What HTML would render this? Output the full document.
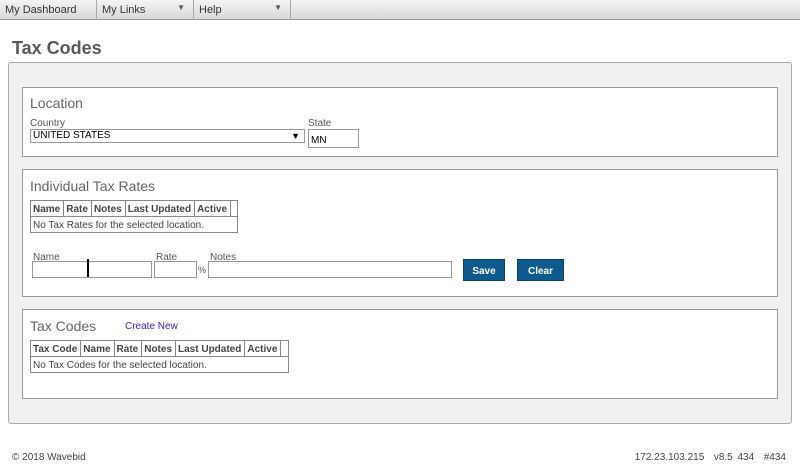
<!DOCTYPE html>
<html><head><style>
*{margin:0;padding:0;box-sizing:border-box}
body{width:800px;height:476px;background:#fff;font-family:"Liberation Sans",sans-serif;color:#555;position:relative;overflow:hidden;font-size:11px}
.a{position:absolute}
.nav{left:0;top:0;width:800px;height:20px;background:linear-gradient(#f4f4f4,#d8d8d8);border-bottom:1px solid #999}
.ni{top:0;height:20px;border-right:1px solid #aaa;padding:4px 5px;color:#333;font-size:11px}
.car{right:8px;top:3px;font-size:8px;color:#555}
.box{background:#fff;border:1px solid #999}
.h{font-size:14px;color:#666}
.lbl{font-size:10px;color:#555}
.inp{background:#fff;border:1px solid #999;height:17px}
table{border-collapse:collapse;font-size:10px;color:#444}
td,th{border:1px solid #888;padding:2px 3px 1px 2px;height:16px;text-align:left;white-space:nowrap}
th{font-weight:bold}
.btn{background:#0d5a8f;color:#fff;font-weight:bold;font-size:10px;text-align:center;line-height:24px;border:1px solid #06446d;height:22px}
</style></head><body>
<div class="a nav"></div>
<div class="a ni" style="left:0;width:97px">My Dashboard</div>
<div class="a ni" style="left:97px;width:97px">My Links<span class="a car">&#9660;</span></div>
<div class="a ni" style="left:194px;width:97px">Help<span class="a car">&#9660;</span></div>
<div class="a" style="left:12px;top:38px;font-size:18px;font-weight:bold;color:#5a5a5a">Tax Codes</div>
<div class="a" style="left:8px;top:62px;width:784px;height:362px;background:#f0f0f0;border:1px solid #aaa;border-radius:3px"></div>

<div class="a box" style="left:22px;top:87px;width:756px;height:70px"></div>
<div class="a h" style="left:30px;top:95px">Location</div>
<div class="a lbl" style="left:30px;top:118px">Country</div>
<div class="a inp" style="left:30px;top:129px;width:275px;height:14px;font-size:10px;color:#000;padding-left:2px;line-height:12px">UNITED STATES<span class="a" style="right:4px;top:0;font-size:9px">&#9660;</span></div>
<div class="a lbl" style="left:308px;top:118px">State</div>
<div class="a inp" style="left:308px;top:129px;width:51px;height:19px;font-size:10px;color:#000;padding:5px 2px">MN</div>

<div class="a box" style="left:22px;top:169px;width:756px;height:128px"></div>
<div class="a h" style="left:30px;top:178px">Individual Tax Rates</div>
<table class="a" style="left:30px;top:200px"><tr><th>Name</th><th>Rate</th><th>Notes</th><th>Last Updated</th><th>Active</th><th style="width:7px"></th></tr><tr><td colspan="6">No Tax Rates for the selected location.</td></tr></table>
<div class="a lbl" style="left:33px;top:252px">Name</div>
<div class="a lbl" style="left:156px;top:252px">Rate</div>
<div class="a lbl" style="left:210px;top:252px">Notes</div>
<div class="a inp" style="left:32px;top:261px;width:120px"></div>
<div class="a" style="left:87px;top:259px;width:2px;height:18px;background:#000"></div>
<div class="a inp" style="left:154px;top:261px;width:43px"></div>
<div class="a lbl" style="left:198px;top:265px;font-size:9px">%</div>
<div class="a inp" style="left:208px;top:261px;width:244px"></div>
<div class="a btn" style="left:463px;top:259px;width:42px">Save</div>
<div class="a btn" style="left:517px;top:259px;width:47px">Clear</div>

<div class="a box" style="left:22px;top:309px;width:756px;height:90px"></div>
<div class="a h" style="left:30px;top:318px">Tax Codes</div>
<div class="a" style="left:125px;top:321px;font-size:10px;color:#3a1ccc">Create New</div>
<table class="a" style="left:30px;top:340px"><tr><th>Tax Code</th><th>Name</th><th>Rate</th><th>Notes</th><th>Last Updated</th><th>Active</th><th style="width:8px"></th></tr><tr><td colspan="7">No Tax Codes for the selected location.</td></tr></table>

<div class="a" style="left:12px;top:452px;font-size:10px;color:#444">© 2018 Wavebid</div>
<div class="a" style="right:14px;top:452px;font-size:10px;color:#444;word-spacing:2px">172.23.103.215&nbsp; v8.5 434&nbsp; #434</div>
</body></html>
